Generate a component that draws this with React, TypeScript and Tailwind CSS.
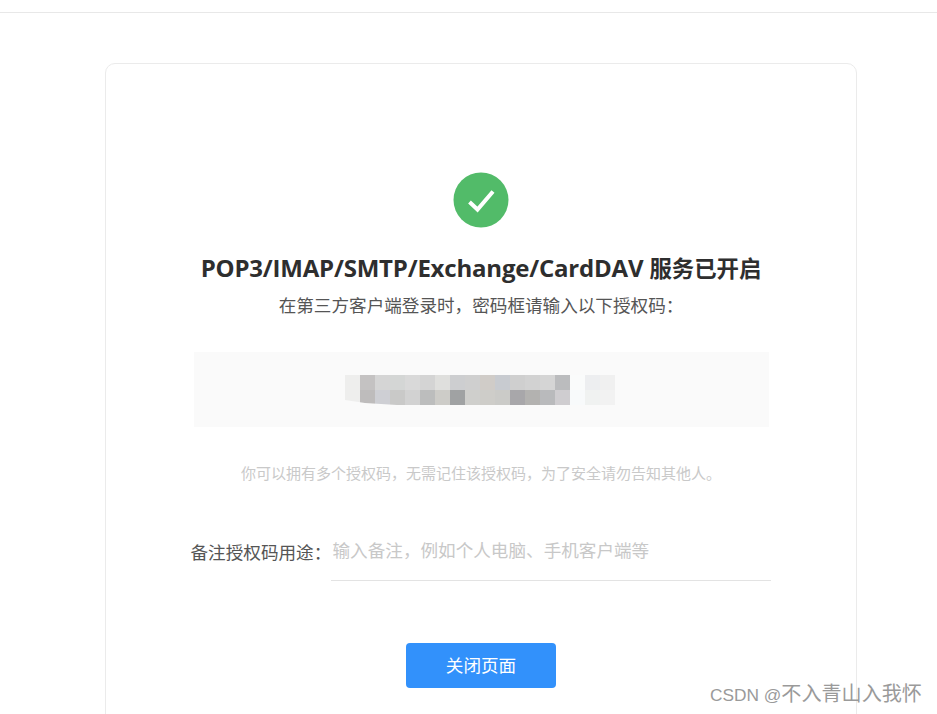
const font = "font-['Open_Sans','Noto_Sans_CJK_SC',sans-serif]";

const row1 = ["#eeeeed", "#c4c2c2", "#d5d5d5", "#d4d6d5", "#d9d9d9", "#d4d4d4", "#dfdfdd", "#cdced0", "#cfcfcf", "#d0ccc8", "#c8cbd0", "#cfcfcf", "#d2d2d2", "#d5d5d5", "#bbbcbe", "#fafbfb", "#edeef0", "#f0f0f0"];
const row2 = ["#eeeeed", "#bebcbc", "#cecfd4", "#c9c9c8", "#d2d2d2", "#bcbdbd", "#cdccc8", "#a0a2a3", "#cfcfcc", "#cecdc9", "#cbcbc8", "#a8a7aa", "#b3b2b0", "#b9babc", "#cfcdd0", "#f8fafb", "#f0f2f1", "#f2f2f2"];

function Mosaic() {
  return (
    <div className="relative -ml-[4px] grid w-[270px] grid-cols-[repeat(18,15px)] grid-rows-[15px_15px]">
      {[...row1, ...row2].map((c, i) => (
        <div key={i} style={{ backgroundColor: c }} />
      ))}
      <svg className="absolute left-0 top-0" width="82" height="30" viewBox="0 0 82 30">
        <polygon points="0,25 20,28 52,30 0,30" fill="#fafafa" />
      </svg>
    </div>
  );
}

export default function App() {
  return (
    <div className={`relative h-screen overflow-hidden bg-white ${font}`}>
      <div className="h-[13px] border-b border-[#e8e8e8]" />
      <div className="ml-[105px] mt-[50px] flex h-[700px] w-[752px] flex-col items-center rounded-[10px] border border-[#ebebeb] pt-[108px]">
        <svg width="56" height="56" viewBox="0 0 56 56">
          <circle cx="28" cy="28" r="27.5" fill="#52bb69" />
          <path d="M16.5 30 L24.5 37.5 L40 19.5" fill="none" stroke="#fff" strokeWidth="4" />
        </svg>
        <h1 className="mt-[22px] whitespace-nowrap text-[22.4px] font-bold leading-[36px] text-[#2e2e2e]">
          <span className="text-[24px] tracking-[-0.2px]">POP3/IMAP/SMTP/Exchange/CardDAV </span>服务已开启
        </h1>
        <p className="mt-[3px] whitespace-nowrap text-[17.6px] leading-[30px] text-[#555]">在第三方客户端登录时，密码框请输入以下授权码：</p>
        <div className="ml-[1px] mt-[32px] flex h-[75px] w-[575px] items-center justify-center bg-[#fafafa]">
          <Mosaic />
        </div>
        <p className="mt-[35px] whitespace-nowrap text-[15px] leading-[22px] text-[#c9c9c9]">你可以拥有多个授权码，无需记住该授权码，为了安全请勿告知其他人。</p>
        <div className="mt-[40px] flex w-[581px] items-start">
          <span className="mt-[3px] w-[140px] shrink-0 whitespace-nowrap text-[17.6px] leading-[50px] text-[#555]">备注授权码用途：</span>
          <div className="h-[57px] w-[440px] border-b border-[#e3e3e3] pl-[2px] text-[17.6px] leading-[52px] text-[#c8c8c8]">输入备注，例如个人电脑、手机客户端等</div>
        </div>
        <button className="mt-[62px] h-[45px] w-[150px] rounded-[4px] bg-[#3291fb] text-[17.6px] text-white">关闭页面</button>
      </div>
      <div className="absolute left-[710px] top-[682px] whitespace-nowrap font-['Liberation_Sans','Noto_Sans_CJK_SC',sans-serif] text-[20.1px] leading-[24px] text-[#9a9a9a]">
        <span className="text-[17.3px]">CSDN @</span>不入青山入我怀
      </div>
    </div>
  );
}
